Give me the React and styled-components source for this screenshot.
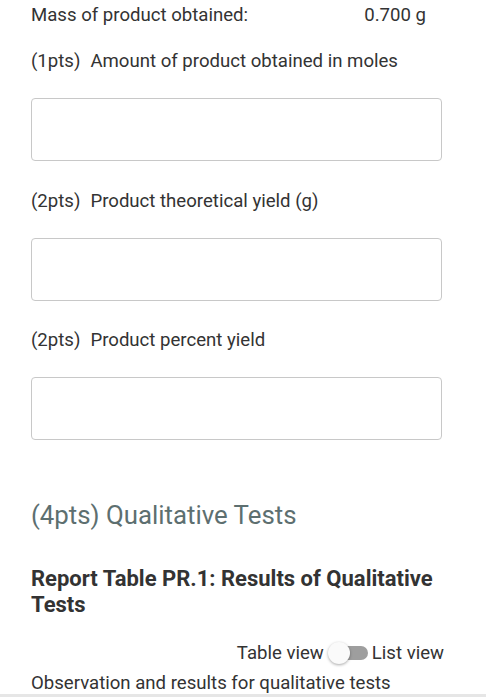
import React, { useState } from 'react'
import styled, { createGlobalStyle } from 'styled-components'

const Global = createGlobalStyle`
  body {
    margin: 0;
    background: #fff;
    font-family: Roboto, "Liberation Sans", sans-serif;
    color: #333;
  }
`

const Page = styled.div`
  padding: 2px 44px 0 31px;
  height: 697px;
  box-sizing: border-box;
  border-bottom: 3px solid #e6e6e6;
  overflow: hidden;
`

const MassRow = styled.div`
  display: flex;
  justify-content: space-between;
  font-size: 18.6px;
  line-height: 26px;
  padding-right: 16px;
`

const Question = styled.div`
  font-size: 18.6px;
  line-height: 26px;
  margin-top: ${p => p.top}px;
`

const Pts = styled.span`
  margin-right: 10px;
`

const AnswerBox = styled.div`
  height: 61px;
  margin-top: 24px;
  border: 1px solid #c8c8c8;
  border-radius: 4px;
`

const SectionTitle = styled.h2`
  margin: 59px 0 0;
  font-size: 25.8px;
  font-weight: 400;
  line-height: 32px;
  color: #5d6f70;
`

const TableTitle = styled.h3`
  margin: 35px 0 0;
  font-size: 22px;
  font-weight: 700;
  line-height: 26px;
  color: #333;
`

const ViewRow = styled.div`
  display: flex;
  justify-content: flex-end;
  align-items: center;
  margin: 22px -2px 0 0;
  font-size: 18.6px;
  line-height: 26px;
`

const Switch = styled.button`
  position: relative;
  width: 40px;
  height: 22px;
  margin: 0 4px 0 4px;
  padding: 0;
  border: none;
  background: transparent;
  cursor: pointer;

  &::before {
    content: "";
    position: absolute;
    left: 10px;
    right: 0;
    top: 4px;
    height: 14px;
    border-radius: 7px;
    background: #9e9e9e;
  }

  &::after {
    content: "";
    position: absolute;
    left: ${p => (p.on ? 18 : 0)}px;
    top: 0;
    width: 22px;
    height: 22px;
    border-radius: 50%;
    background: #fafafa;
    box-shadow: 0 1px 3px rgba(0, 0, 0, 0.35);
  }
`

const Caption = styled.div`
  font-size: 18.6px;
  line-height: 26px;
  margin-top: 4px;
`

const questions = [
  { pts: '(1pts)', text: 'Amount of product obtained in moles', top: 20 },
  { pts: '(2pts)', text: 'Product theoretical yield (g)', top: 27 },
  { pts: '(2pts)', text: 'Product percent yield', top: 26 },
]

export default function App() {
  const [list, setList] = useState(false)
  return (
    <Page>
      <Global />
      <MassRow>
        <span>Mass of product obtained:</span>
        <span>0.700 g</span>
      </MassRow>
      {questions.map((q, i) => (
        <React.Fragment key={i}>
          <Question top={q.top}>
            <Pts>{q.pts}</Pts>
            {q.text}
          </Question>
          <AnswerBox />
        </React.Fragment>
      ))}
      <SectionTitle>(4pts) Qualitative Tests</SectionTitle>
      <TableTitle>Report Table PR.1: Results of Qualitative Tests</TableTitle>
      <ViewRow>
        Table view
        <Switch on={list ? 1 : 0} onClick={() => setList(!list)} />
        List view
      </ViewRow>
      <Caption>Observation and results for qualitative tests</Caption>
    </Page>
  )
}
